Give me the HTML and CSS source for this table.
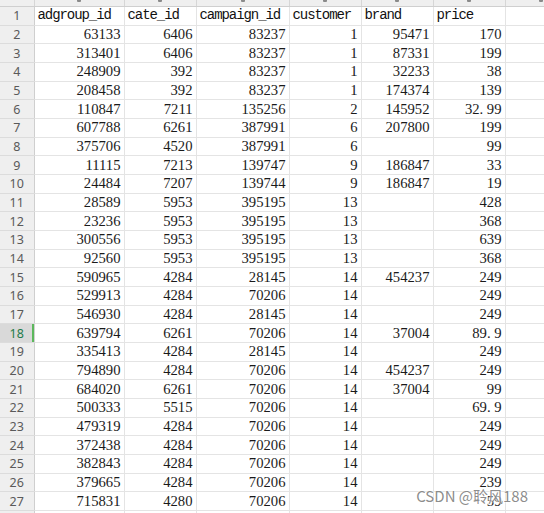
FILE: index.html
```html
<!DOCTYPE html>
<html lang="zh">
<head>
<meta charset="utf-8">
<title>Sheet</title>
<link rel="stylesheet" href="styles.css">
</head>
<body>
<div class="wrap">
<table class="sheet">
<colgroup>
<col class="w-rh"><col class="w-a"><col class="w-b"><col class="w-c"><col class="w-d"><col class="w-e"><col class="w-f"><col class="w-g">
</colgroup>
<thead>
<tr class="letters"><th class="corner"></th><th class="mk"></th><th class="mk"></th><th class="mk"></th><th class="mk"></th><th class="mk"></th><th class="mk"></th><th class="mk"></th></tr>
</thead>
<tbody>
<tr><th>1</th><td class="t">adgroup_id</td><td class="t">cate_id</td><td class="t">campaign_id</td><td class="t">customer</td><td class="t">brand</td><td class="t">price</td><td></td></tr>
<tr><th>2</th><td>63133</td><td>6406</td><td>83237</td><td>1</td><td>95471</td><td>170</td><td></td></tr>
<tr><th>3</th><td>313401</td><td>6406</td><td>83237</td><td>1</td><td>87331</td><td>199</td><td></td></tr>
<tr><th>4</th><td>248909</td><td>392</td><td>83237</td><td>1</td><td>32233</td><td>38</td><td></td></tr>
<tr><th>5</th><td>208458</td><td>392</td><td>83237</td><td>1</td><td>174374</td><td>139</td><td></td></tr>
<tr><th>6</th><td>110847</td><td>7211</td><td>135256</td><td>2</td><td>145952</td><td>32<span class="dot">.</span>99</td><td></td></tr>
<tr><th>7</th><td>607788</td><td>6261</td><td>387991</td><td>6</td><td>207800</td><td>199</td><td></td></tr>
<tr><th>8</th><td>375706</td><td>4520</td><td>387991</td><td>6</td><td></td><td>99</td><td></td></tr>
<tr><th>9</th><td>11115</td><td>7213</td><td>139747</td><td>9</td><td>186847</td><td>33</td><td></td></tr>
<tr><th>10</th><td>24484</td><td>7207</td><td>139744</td><td>9</td><td>186847</td><td>19</td><td></td></tr>
<tr><th>11</th><td>28589</td><td>5953</td><td>395195</td><td>13</td><td></td><td>428</td><td></td></tr>
<tr><th>12</th><td>23236</td><td>5953</td><td>395195</td><td>13</td><td></td><td>368</td><td></td></tr>
<tr><th>13</th><td>300556</td><td>5953</td><td>395195</td><td>13</td><td></td><td>639</td><td></td></tr>
<tr><th>14</th><td>92560</td><td>5953</td><td>395195</td><td>13</td><td></td><td>368</td><td></td></tr>
<tr><th>15</th><td>590965</td><td>4284</td><td>28145</td><td>14</td><td>454237</td><td>249</td><td></td></tr>
<tr><th>16</th><td>529913</td><td>4284</td><td>70206</td><td>14</td><td></td><td>249</td><td></td></tr>
<tr><th>17</th><td>546930</td><td>4284</td><td>28145</td><td>14</td><td></td><td>249</td><td></td></tr>
<tr class="active"><th>18</th><td>639794</td><td>6261</td><td>70206</td><td>14</td><td>37004</td><td>89<span class="dot">.</span>9</td><td></td></tr>
<tr><th>19</th><td>335413</td><td>4284</td><td>28145</td><td>14</td><td></td><td>249</td><td></td></tr>
<tr><th>20</th><td>794890</td><td>4284</td><td>70206</td><td>14</td><td>454237</td><td>249</td><td></td></tr>
<tr><th>21</th><td>684020</td><td>6261</td><td>70206</td><td>14</td><td>37004</td><td>99</td><td></td></tr>
<tr><th>22</th><td>500333</td><td>5515</td><td>70206</td><td>14</td><td></td><td>69<span class="dot">.</span>9</td><td></td></tr>
<tr><th>23</th><td>479319</td><td>4284</td><td>70206</td><td>14</td><td></td><td>249</td><td></td></tr>
<tr><th>24</th><td>372438</td><td>4284</td><td>70206</td><td>14</td><td></td><td>249</td><td></td></tr>
<tr><th>25</th><td>382843</td><td>4284</td><td>70206</td><td>14</td><td></td><td>249</td><td></td></tr>
<tr><th>26</th><td>379665</td><td>4284</td><td>70206</td><td>14</td><td></td><td>239</td><td></td></tr>
<tr><th>27</th><td>715831</td><td>4280</td><td>70206</td><td>14</td><td></td><td>59</td><td></td></tr>
<tr><th></th><td></td><td></td><td></td><td></td><td></td><td></td><td></td></tr>
</tbody>
</table>
<div class="watermark">CSDN @聆风188</div>
</div>
</body>
</html>
```

FILE: styles.css
```css
html, body {
  margin: 0;
  padding: 0;
  background: #ffffff;
  overflow: hidden;
}
.wrap {
  position: relative;
  width: 544px;
  height: 513px;
  overflow: hidden;
}
.sheet {
  border-collapse: collapse;
  table-layout: fixed;
  width: 577px;
  font-family: "Liberation Serif", "Times New Roman", serif;
  font-size: 14.67px;
  color: #1a1a1a;
}
.w-rh { width: 34px; }
.w-a { width: 90px; }
.w-b { width: 72px; }
.w-c { width: 93px; }
.w-d { width: 72px; }
.w-e { width: 72px; }
.w-f { width: 72px; }
.w-g { width: 72px; }

.letters th {
  height: 6px;
  padding: 0;
  background: #efefef;
  border-right: 1px solid #d6d6d6;
  border-bottom: 1px solid #cfcfcf;
  position: relative;
}
.letters th.mk::after {
  content: "";
  position: absolute;
  left: 50%;
  top: 0;
  width: 4px;
  height: 2px;
  margin-left: -2px;
  background: #8a8a8a;
  border-radius: 0 0 1px 1px;
}

tbody tr {
  height: 18.68px;
}
tbody th {
  padding: 0;
  background: #efefef;
  border-bottom: 1px solid #dcdcdc;
  border-right: 1px solid #cfcfcf;
  font-family: "Noto Sans", "Liberation Sans", sans-serif;
  font-weight: normal;
  font-size: 12.5px;
  color: #5a5a5a;
  text-align: center;
  line-height: 17px;
}
tbody td {
  padding: 0 3px 0 3px;
  border-bottom: 1px solid #e4e4e4;
  border-right: 1px solid #e4e4e4;
  text-align: right;
  white-space: nowrap;
  overflow: hidden;
  line-height: 17px;
}
tbody td.t {
  text-align: left;
  font-family: "Liberation Mono", "Courier New", monospace;
  font-size: 14px;
  letter-spacing: -1.07px;
  color: #111;
}
.dot {
  display: inline-block;
  width: 7.3px;
  text-align: left;
}
tr.active th {
  background: #d9d9d9;
  color: #1e7b4a;
  box-shadow: inset -2px 0 0 #5cb85c;
}
.watermark {
  position: absolute;
  right: 16px;
  bottom: 9px;
  font-family: "Noto Sans CJK SC", "Noto Sans", sans-serif;
  font-size: 15px;
  line-height: 17px;
  color: rgba(110, 110, 110, 0.8);
  text-shadow: 0 0 2px #fff, 0 0 2px #fff;
}
```
